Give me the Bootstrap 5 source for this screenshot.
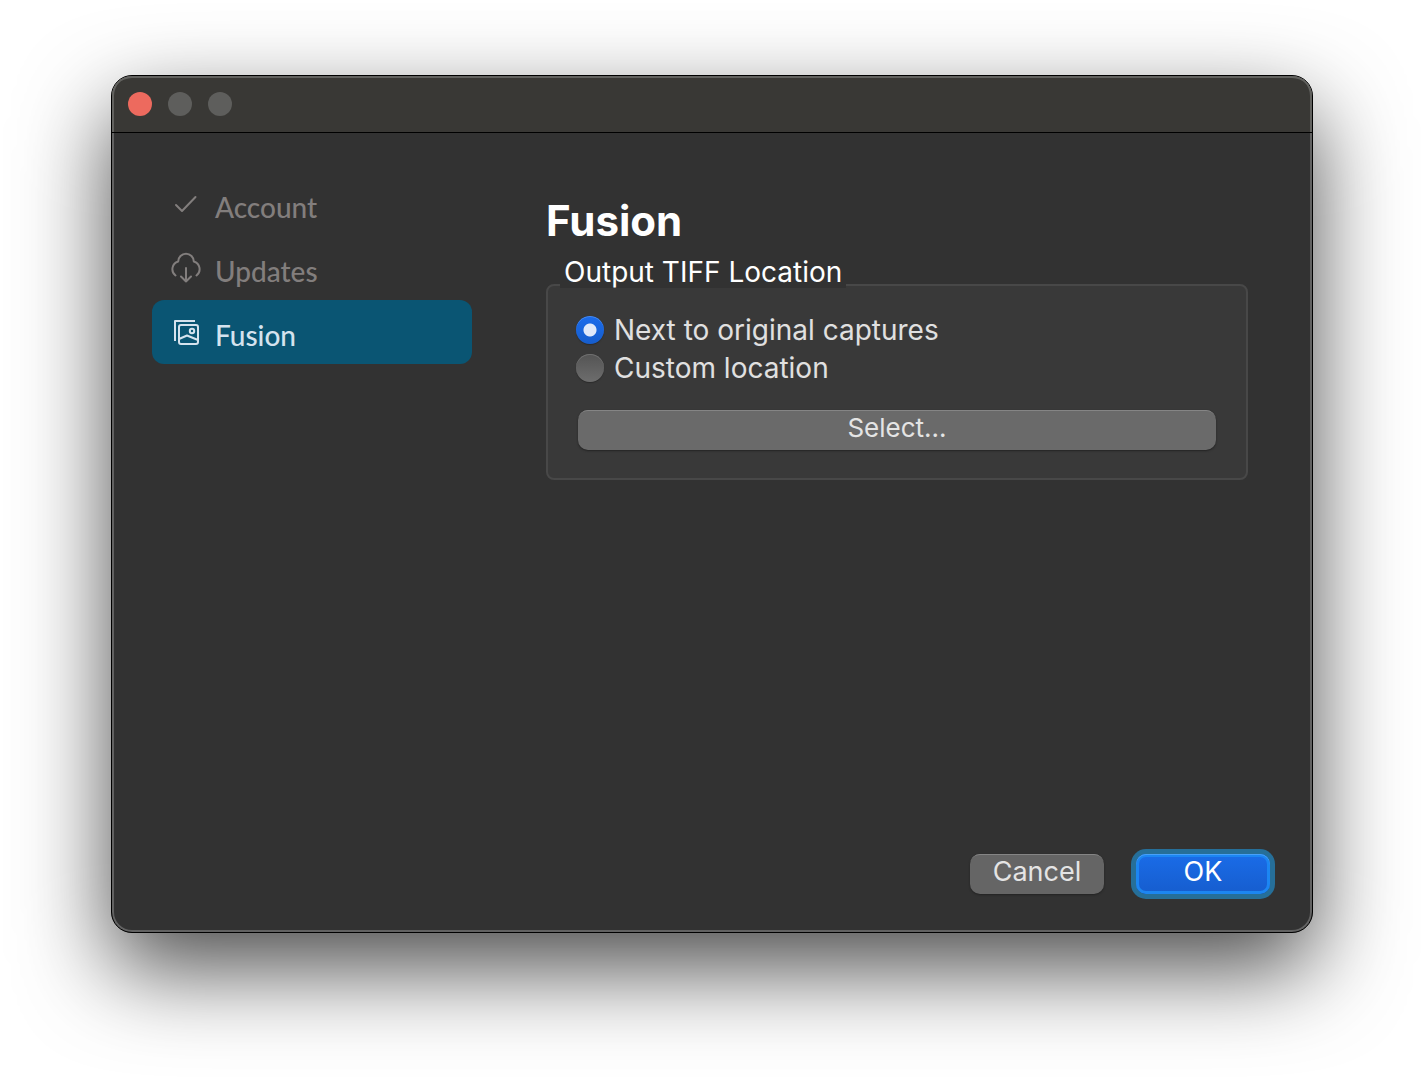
<!DOCTYPE html>
<html lang="en">
<head>
<meta charset="utf-8">
<meta name="viewport" content="width=device-width, initial-scale=1">
<title>Preferences</title>
<link href="https://cdn.jsdelivr.net/npm/bootstrap@5.3.0/dist/css/bootstrap.min.css" rel="stylesheet">
<style>
  body { font-family: Inter, "Open Sans", sans-serif; font-size: 28px; line-height: 32px; background: #fff; }
  .desk { min-height: 100vh; padding: 75px 111px 147px; }
  .pref-window {
    background: #323232; border: 1px solid #000; border-radius: 21px;
    box-shadow: inset 0 0 0 2px #626262, 0 36px 90px rgba(0,0,0,.7);
  }
  .title-strip {
    height: 57px; padding: 0 16px; background: #393835; border-bottom: 1px solid #000;
    border-radius: 20px 20px 0 0; box-shadow: inset 0 2px 0 #62625f, inset 2px 0 0 #62625f, inset -2px 0 0 #62625f;
  }
  .dot { width: 24px; height: 24px; border: 0; padding: 0; border-radius: 50%; background: #5e5e5c; }
  .dot-close { background: #ed6a5e; }
  .side { width: 360px; padding: 39px 0 0 40px; }
  .side a { height: 64px; width: 320px; padding: 6px 18px 0 18px; border-radius: 12px; color: #827e7d; text-decoration: none; font-family: Lato, sans-serif; font-weight: 500; }
  .side a.active { background: #0a5573; color: #d5e3ee; }
  .side svg { width: 32px; height: 32px; margin: -6px 13px 0 0; fill: none; stroke: currentColor; stroke-width: 2; stroke-linecap: round; stroke-linejoin: round; overflow: visible; }
  .pane { padding: 64px 64px 0 74px; color: #e0e0e0; }
  .pane h1 { font-size: 42px; line-height: 48px; font-weight: 700; color: #fff; margin: 0 0 12px; }
  .group-title { font-size: 28px; line-height: 31px; color: #fff; background: #323232; padding: 0 4px; margin: 0 0 0 14px; }
  .group-box { margin-top: -4px; padding: 25px 30px 28px 28px; background: #393939; border: 2px solid #484848; border-radius: 8px; }
  .choice { height: 38px; gap: 10px; }
  .choice input {
    appearance: none; width: 28px; height: 28px; margin: 0; border-radius: 50%;
    background: linear-gradient(#545454, #6d6d6d); box-shadow: inset 0 1px 0 #707070, 0 1px 1px #2a2a2a;
  }
  .choice input:checked { background: radial-gradient(circle, #e0e9fa 0 6px, transparent 7px), linear-gradient(#1b6cec, #165dcc); box-shadow: inset 0 1px 0 #4a8cf0, 0 1px 1px #2a2a2a; }
  .picker { padding: 23px 0 0 2px; }
  .push {
    height: 40px; padding: 0 0 4px; border: 0; border-radius: 10px; color: #e4e4e4; background: #6a6a6a;
    font-size: 26px; line-height: 36px; box-shadow: inset 0 2px 0 -1px #858585, 0 1px 2px #222;
  }
  .push-foot { width: 134px; background: #656565; font-size: 27px; }
  .push-main { color: #fff; background: linear-gradient(#1a6ce8, #165dce); box-shadow: inset 0 1px 0 #48a0f8, inset 0 0 0 3px #1c86f2, 0 0 0 5px #266f99; }
  .foot { gap: 32px; padding: 0 42px 38px; }
</style>
<script src="https://cdn.jsdelivr.net/npm/bootstrap@5.3.0/dist/js/bootstrap.bundle.min.js"></script>
</head>
<body>
<div class="desk d-flex">
  <div class="pref-window d-flex flex-column flex-grow-1">
    <header class="title-strip d-flex align-items-center gap-3">
      <button class="dot dot-close" type="button" aria-label="Close"></button>
      <button class="dot" type="button" aria-label="Minimize" disabled></button>
      <button class="dot" type="button" aria-label="Zoom" disabled></button>
    </header>
    <div class="d-flex flex-grow-1">
      <nav class="side flex-shrink-0">
        <a href="#" class="d-flex align-items-center">
          <svg viewBox="0 0 32 32" aria-hidden="true"><path d="M6 17l6 6L25.500 9"/></svg>Account</a>
        <a href="#" class="d-flex align-items-center">
          <svg viewBox="0 0 32 32" aria-hidden="true"><path d="M5.500 23.500A8 8 0 0 1 8.200 9.500A7.800 7.800 0 0 1 23.800 9.500A8 8 0 0 1 26.500 23.500M16 16v13.500M11 24.500l5 5 5-5"/></svg>Updates</a>
        <a href="#" class="d-flex align-items-center active" aria-current="page">
          <svg viewBox="0 0 32 32" aria-hidden="true"><path stroke-linecap="butt" d="M5 25V5h20M11 9h15q2 0 2 2v15q0 2-2 2H11q-2 0-2-2V11q0-2 2-2zM9 23l8-3.500 11 4.500"/><circle cx="22" cy="15" r="2.200"/></svg>Fusion</a>
      </nav>
      <main class="pane flex-grow-1">
        <h1>Fusion</h1>
        <fieldset>
          <legend class="group-title float-none w-auto d-table position-relative z-1">Output TIFF Location</legend>
          <div class="group-box">
            <label class="choice d-flex align-items-center"><input type="radio" name="place" checked>Next to original captures</label>
            <label class="choice d-flex align-items-center"><input type="radio" name="place">Custom location</label>
            <div class="picker"><button class="push w-100" type="button">Select...</button></div>
          </div>
        </fieldset>
      </main>
    </div>
    <footer class="foot d-flex justify-content-end">
      <button class="push push-foot" type="button">Cancel</button>
      <button class="push push-foot push-main" type="button">OK</button>
    </footer>
  </div>
</div>
</body>
</html>
